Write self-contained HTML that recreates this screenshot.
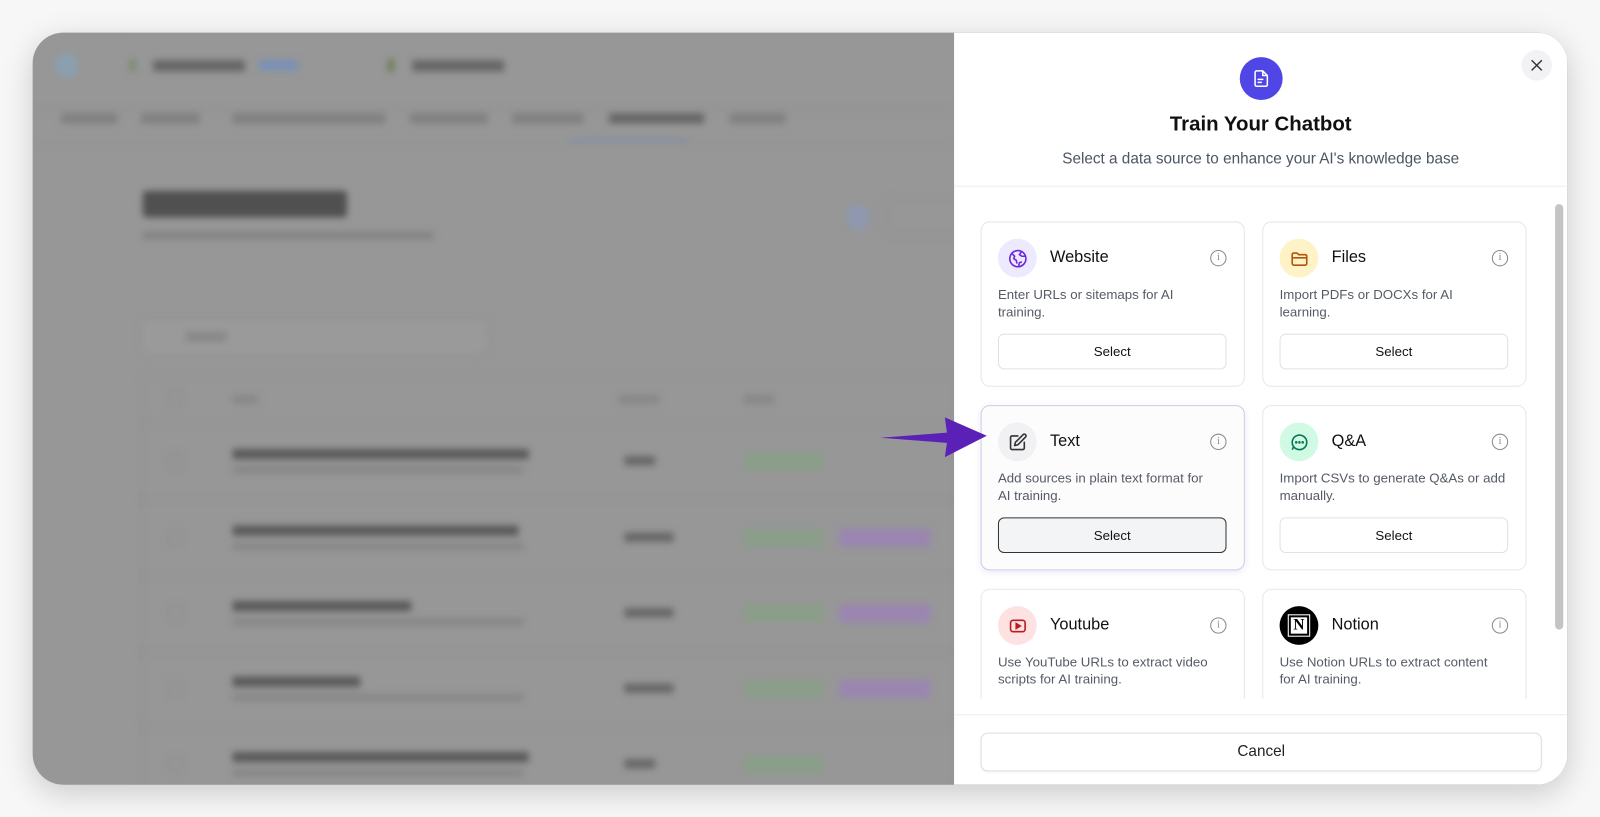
<!DOCTYPE html>
<html><head><meta charset="utf-8"><style>
*{box-sizing:border-box;margin:0;padding:0}
html,body{width:1600px;height:817px;overflow:hidden;background:#fafafa;font-family:"Liberation Sans",sans-serif}
#w{position:absolute;left:0;top:0;width:1568px;height:801px;transform:scale(1.0204);transform-origin:0 0;background:#f7f7f7}
.win{position:absolute;left:32px;top:32px;width:1504px;height:737px;border-radius:30px;overflow:hidden;box-shadow:0 8px 30px rgba(0,0,0,.18);background:#979797}
.bg{position:absolute;left:0;top:0;width:903px;height:737px;filter:blur(3.5px)}
.bg div{position:absolute}
.panel{position:absolute;left:903px;top:0;width:601px;height:737px;background:#fff}
.p{position:absolute}
.card{position:absolute;width:259px;height:162px;border:1px solid #e6e6ee;border-radius:9px;background:#fff}
.ic{position:absolute;left:16px;top:16px;width:38px;height:38px;border-radius:50%;display:flex;align-items:center;justify-content:center}
.ct{position:absolute;left:67px;top:26px;font-size:16px;color:#111}
.info{position:absolute;left:224px;top:27px;width:16px;height:16px;border:1.3px solid #888;border-radius:50%;font-size:10px;color:#888;text-align:center;line-height:13px;font-family:"Liberation Serif",serif}
.cd{position:absolute;left:16px;top:62px;width:235px;font-size:13px;line-height:17px;color:#555b66;white-space:nowrap}
.btn{position:absolute;left:16px;top:109px;width:224px;height:35px;border:1px solid #e2e2e6;border-radius:6px;font-size:13px;color:#111;text-align:center;line-height:33px;background:#fff}
</style></head><body><div id="w">
<div class="win">
 <div class="bg">
  <div style="left:22px;top:20px;width:22px;height:24px;border-radius:50%;background:#8aa0b0"></div>
  <div style="left:95px;top:26px;width:6px;height:12px;background:#7a8a6a"></div>
  <div style="left:118px;top:27px;width:90px;height:11px;background:#666"></div>
  <div style="left:222px;top:27px;width:38px;height:10px;background:#7890b8"></div>
  <div style="left:348px;top:26px;width:6px;height:12px;background:#6a7a50"></div>
  <div style="left:372px;top:27px;width:90px;height:11px;background:#666"></div>
  <div style="left:0;top:74px;width:903px;height:1px;background:#8a8a8a"></div>
  <div style="left:28px;top:79px;width:710px;height:10px;background:linear-gradient(90deg,#808080 0 55px,transparent 55px 78px,#808080 78px 136px,transparent 136px 168px,#808080 168px 318px,transparent 318px 342px,#808080 342px 418px,transparent 418px 442px,#808080 442px 512px,transparent 512px 537px,#666 537px 630px,transparent 630px 655px,#808080 655px 718px)"></div>
  <div style="left:525px;top:104px;width:118px;height:3px;background:#7f8fa8"></div>
  <div style="left:0;top:108px;width:903px;height:1px;background:#8d8d8d"></div>
  <div style="left:108px;top:155px;width:200px;height:26px;background:#505050;border-radius:3px"></div>
  <div style="left:108px;top:195px;width:285px;height:8px;background:#848484"></div>
  <div style="left:798px;top:168px;width:22px;height:26px;border-radius:50%;background:#8f98b0"></div>
  <div style="left:835px;top:160px;width:80px;height:40px;border:1px solid #8e8e8e;border-radius:8px"></div>
  <div style="left:106px;top:280px;width:340px;height:36px;border:1px solid #8e8e8e;border-radius:6px;background:#9a9a9a"></div>
  <div style="left:150px;top:293px;width:40px;height:10px;background:#888"></div>
  <div style="left:106px;top:335px;width:800px;height:410px;border:1px solid #8d8d8d;border-radius:8px"></div>
  <div style="left:132px;top:350px;width:14px;height:16px;border:1px solid #888;border-radius:3px"></div>
  <div style="left:196px;top:355px;width:25px;height:9px;background:#888"></div>
  <div style="left:574px;top:355px;width:40px;height:9px;background:#888"></div>
  <div style="left:697px;top:355px;width:30px;height:9px;background:#888"></div>
  <div style="left:106px;top:383px;width:800px;height:1px;background:#8c8c8c"></div>
 </div>
 <div class="bg" id="rows"></div>
 <div class="panel">
  <div class="p" style="left:280px;top:24px;width:42px;height:42px;border-radius:50%;background:#4f46e5;display:flex;align-items:center;justify-content:center">
   <svg width="18" height="18" viewBox="0 0 24 24" fill="none" stroke="#fff" stroke-width="2" stroke-linecap="round" stroke-linejoin="round"><path d="M14 2H6a2 2 0 0 0-2 2v16a2 2 0 0 0 2 2h12a2 2 0 0 0 2-2V8z"/><path d="M14 2v6h6M8 13h6M8 17h4"/></svg></div>
  <div class="p" style="left:0;width:601px;top:79px;text-align:center;font-size:20px;font-weight:bold;color:#111">Train Your Chatbot</div>
  <div class="p" style="left:0;width:601px;top:115px;text-align:center;font-size:15px;color:#4b5563">Select a data source to enhance your AI's knowledge base</div>
  <div class="p" style="left:556px;top:17px;width:30px;height:30px;border-radius:50%;background:#f2f2f4;display:flex;align-items:center;justify-content:center"><svg width="12" height="12" viewBox="0 0 12 12" stroke="#333" stroke-width="1.4"><path d="M1 1l10 10M11 1L1 11"/></svg></div>
  <div class="p" style="left:0;top:150px;width:601px;height:1px;background:#eee"></div>

  <div class="card" style="left:26px;top:185px"><div class="ic" style="background:#ede9fe"><svg width="19" height="19" viewBox="0 0 24 24" fill="none" stroke="#6d28d9" stroke-width="2"><circle cx="12" cy="12" r="10"/><path d="M5 6l3 3-1 3 3 2 1 4M16 4l-2 3 3 2 4 0M13 21l1-4 3-1"/></svg></div><div class="ct">Website</div><div class="info">i</div><div class="cd">Enter URLs or sitemaps for AI<br>training.</div><div class="btn">Select</div></div>
  <div class="card" style="left:302px;top:185px"><div class="ic" style="background:#fef3c7"><svg width="19" height="19" viewBox="0 0 24 24" fill="none" stroke="#b45309" stroke-width="2" stroke-linejoin="round"><path d="M3 7a2 2 0 0 1 2-2h4l2 2h8a2 2 0 0 1 2 2v9a2 2 0 0 1-2 2H5a2 2 0 0 1-2-2z"/><path d="M3 11h18"/></svg></div><div class="ct">Files</div><div class="info">i</div><div class="cd">Import PDFs or DOCXs for AI<br>learning.</div><div class="btn">Select</div></div>
  <div class="card" style="left:26px;top:365px;border-color:#cfcdea;background:#fcfcfd;box-shadow:0 2px 6px rgba(80,70,200,.12)"><div class="ic" style="background:#f1f1f3"><svg width="19" height="19" viewBox="0 0 24 24" fill="none" stroke="#333" stroke-width="2" stroke-linecap="round" stroke-linejoin="round"><path d="M12 4H5a2 2 0 0 0-2 2v13a2 2 0 0 0 2 2h13a2 2 0 0 0 2-2v-7"/><path d="M18.5 2.5a2.1 2.1 0 0 1 3 3L12 15l-4 1 1-4z"/></svg></div><div class="ct">Text</div><div class="info">i</div><div class="cd">Add sources in plain text format for<br>AI training.</div><div class="btn" style="border:1.3px solid #333;background:#f3f4f6">Select</div></div>
  <div class="card" style="left:302px;top:365px"><div class="ic" style="background:#d1fae5"><svg width="19" height="19" viewBox="0 0 24 24" fill="none" stroke="#047857" stroke-width="2"><path d="M21 12a9 9 0 1 1-4-7.5A9 9 0 0 1 21 12zM3 21l2-4"/><circle cx="8" cy="12" r=".6" fill="#047857"/><circle cx="12" cy="12" r=".6" fill="#047857"/><circle cx="16" cy="12" r=".6" fill="#047857"/></svg></div><div class="ct">Q&amp;A</div><div class="info">i</div><div class="cd">Import CSVs to generate Q&amp;As or add<br>manually.</div><div class="btn">Select</div></div>
  <div class="p" style="left:0;top:545px;width:601px;height:108px;overflow:hidden">
   <div class="card" style="left:26px;top:0;height:180px"><div class="ic" style="background:#fee2e2"><svg width="19" height="19" viewBox="0 0 24 24" fill="none" stroke="#b91c1c" stroke-width="2"><rect x="3" y="5" width="18" height="14" rx="3"/><path d="M10 9l5 3-5 3z" fill="#b91c1c"/></svg></div><div class="ct">Youtube</div><div class="info">i</div><div class="cd">Use YouTube URLs to extract video<br>scripts for AI training.</div></div>
   <div class="card" style="left:302px;top:0;height:180px"><div class="ic" style="background:#000"><div style="width:20px;height:20px;background:#fff;border:2px solid #000;outline:1.5px solid #fff;font-family:'Liberation Serif',serif;font-weight:bold;font-size:15px;line-height:17px;text-align:center;color:#000">N</div></div><div class="ct">Notion</div><div class="info">i</div><div class="cd">Use Notion URLs to extract content<br>for AI training.</div></div>
  </div>
  <div class="p" style="left:589px;top:168px;width:8px;height:417px;border-radius:4px;background:#c4c4c4"></div>
  <div class="p" style="left:0;top:668px;width:601px;height:1px;background:#eee"></div>
  <div class="p" style="left:26px;top:686px;width:550px;height:38px;border:1px solid #ddd;border-radius:7px;text-align:center;line-height:36px;font-size:15px;color:#222;box-shadow:0 1px 2px rgba(0,0,0,.05)">Cancel</div>
 </div>
</div>
<svg style="position:absolute;left:0;top:0" width="1568" height="801"><polygon points="863,429 928,424 926,409 967,427 926,448 928,434" fill="#5b21b6"/></svg>
</div>
<script>
var r=document.getElementById('rows'),h='';
var ys=[420,495,569,643,717];var p=[0,1,1,1,0];var tw=[290,280,175,125,290];
ys.forEach(function(y,i){
h+='<div style="left:132px;top:'+(y-8)+'px;width:14px;height:16px;border:1px solid #888;border-radius:3px"></div>';
h+='<div style="left:196px;top:'+(y-12)+'px;width:'+tw[i]+'px;height:10px;background:#5a5a5a"></div>';
h+='<div style="left:196px;top:'+(y+5)+'px;width:285px;height:7px;background:#868686"></div>';
h+='<div style="left:580px;top:'+(y-5)+'px;width:'+(p[i]?48:30)+'px;height:9px;background:#666"></div>';
h+='<div style="left:697px;top:'+(y-9)+'px;width:78px;height:18px;background:#8a9e8a;border-radius:3px"></div>';
if(p[i])h+='<div style="left:790px;top:'+(y-9)+'px;width:90px;height:18px;background:#9a86b0;border-radius:3px"></div>';
if(i<4)h+='<div style="left:106px;top:'+(y+37)+'px;width:800px;height:1px;background:#8c8c8c"></div>';
});
r.innerHTML=h;
</script>
</body></html>
